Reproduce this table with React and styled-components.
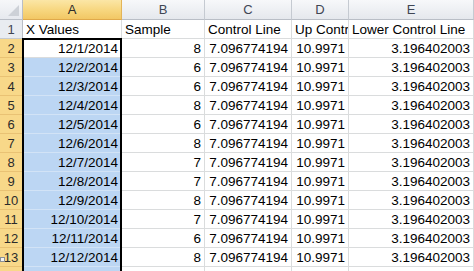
import styled, { createGlobalStyle } from "styled-components";

const GlobalStyle = createGlobalStyle`
  html, body {
    margin: 0;
    padding: 0;
    background: #ffffff;
    overflow: hidden;
  }
`;

const Sheet = styled.div`
  position: relative;
  display: grid;
  grid-template-columns: 23px 99px 83px 87px 57px 125px;
  grid-template-rows: 20px repeat(14, 19px);
  font-family: "Liberation Sans", Arial, sans-serif;
  font-size: 13.5px;
  color: #000;
  width: 474px;
`;

const Corner = styled.div`
  position: relative;
  background: linear-gradient(#f6f7f9, #e6e9ee);
  border-right: 1px solid #b9bec6;
  border-bottom: 1px solid #b9bec6;

  &::after {
    content: "";
    position: absolute;
    right: 3px;
    bottom: 3px;
    width: 0;
    height: 0;
    border-left: 11px solid transparent;
    border-bottom: 11px solid #cdd1d7;
  }
`;

const ColHead = styled.div`
  display: flex;
  align-items: center;
  justify-content: center;
  font-size: 13px;
  color: ${(p) => (p.$on ? "#2b2b2b" : "#3f4654")};
  background: ${(p) =>
    p.$on
      ? "linear-gradient(#fbe6a6, #f7d67e 55%, #f2c764)"
      : "linear-gradient(#f7f8fa, #e5e8ed)"};
  border-right: 1px solid ${(p) => (p.$on ? "#e3b458" : "#c5cad1")};
  border-bottom: 1px solid ${(p) => (p.$on ? "#e0a94a" : "#b9bec6")};
`;

const RowHead = styled.div`
  display: flex;
  align-items: center;
  justify-content: center;
  font-size: 13px;
  color: ${(p) => (p.$on ? "#2b2b2b" : "#3f4654")};
  background: ${(p) => (p.$on ? "#f8d889" : "#e9ecf1")};
  border-right: 1px solid ${(p) => (p.$on ? "#e0a94a" : "#b9bec6")};
  border-bottom: 1px solid ${(p) => (p.$on ? "#e9c274" : "#c5cad1")};
`;

const Cell = styled.div`
  display: flex;
  align-items: center;
  justify-content: ${(p) => (p.$num ? "flex-end" : "flex-start")};
  padding: ${(p) => (p.$num ? "0 3px 0 2px" : "0 2px 0 3px")};
  white-space: nowrap;
  overflow: hidden;
  background: ${(p) => (p.$sel ? "#bcd6f3" : "#ffffff")};
  border-right: 1px solid ${(p) => (p.$sel ? "#bcd6f3" : "#dadcdd")};
  border-bottom: 1px solid ${(p) => (p.$sel ? "#d2e3f6" : "#dadcdd")};
  padding-top: 1px;
`;

const Selection = styled.div`
  position: absolute;
  left: 22px;
  top: 38px;
  width: 96px;
  height: 240px;
  border: 2px solid #000;
  pointer-events: none;
`;

const OptionsMark = styled.div`
  position: absolute;
  left: 0;
  top: 257px;
  width: 3px;
  height: 3px;
  border: 1px solid #8a8f96;
  background: #f4f4f4;
`;

const rows = [
  ["12/1/2014", 8],
  ["12/2/2014", 6],
  ["12/3/2014", 6],
  ["12/4/2014", 8],
  ["12/5/2014", 6],
  ["12/6/2014", 8],
  ["12/7/2014", 7],
  ["12/8/2014", 7],
  ["12/9/2014", 8],
  ["12/10/2014", 7],
  ["12/11/2014", 6],
  ["12/12/2014", 8],
];

export default function App() {
  return (
    <>
      <GlobalStyle />
      <Sheet>
        <Corner />
        {["A", "B", "C", "D", "E"].map((c) => (
          <ColHead key={c} $on={c === "A"}>
            {c}
          </ColHead>
        ))}

        <RowHead>1</RowHead>
        <Cell>X Values</Cell>
        <Cell>Sample</Cell>
        <Cell>Control Line</Cell>
        <Cell>Up Control Line</Cell>
        <Cell>Lower Control Line</Cell>

        {rows.map(([date, sample], i) => (
          <Row key={date} n={i + 2} date={date} sample={sample} first={i === 0} />
        ))}

        {/* sliver of the next row, cut by the frame */}
        <RowHead $on />
        <Cell $sel />
        <Cell />
        <Cell />
        <Cell />
        <Cell />

        <Selection />
        <OptionsMark />
      </Sheet>
    </>
  );
}

function Row({ n, date, sample, first }) {
  return (
    <>
      <RowHead $on>{n}</RowHead>
      <Cell $num $sel={!first}>
        {date}
      </Cell>
      <Cell $num>{sample}</Cell>
      <Cell $num>7.096774194</Cell>
      <Cell $num>10.9971</Cell>
      <Cell $num>3.196402003</Cell>
    </>
  );
}
